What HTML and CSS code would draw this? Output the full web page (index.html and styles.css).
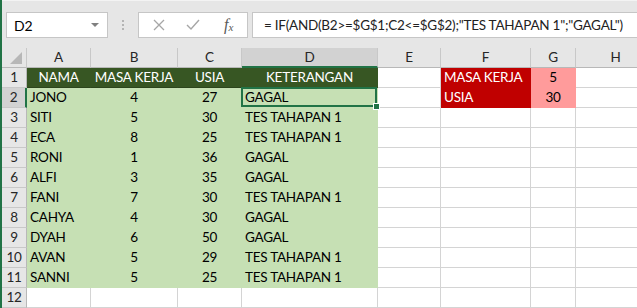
FILE: index.html
```html
<!DOCTYPE html>
<html lang="id">
<head>
    <meta charset="UTF-8">
    <title>Excel - IF AND</title>
    <link rel="stylesheet" href="styles.css">
</head>
<body>
    <div class="app">
        <div class="formula-bar">
            <div class="name-box">
                <span>D2</span>
                <span class="drop"></span>
            </div>
            <div class="grip"><i></i><i></i><i></i></div>
            <div class="fx-buttons">
                <svg width="12" height="12" viewBox="0 0 12 12"><path d="M1 1 L11 11 M11 1 L1 11" stroke="#a6a6a6" stroke-width="1.3" fill="none"/></svg>
                <svg width="14" height="12" viewBox="0 0 14 12"><path d="M1 6 L5 10 L13 1" stroke="#a6a6a6" stroke-width="1.4" fill="none"/></svg>
                <span class="fx">f<sub>x</sub></span>
            </div>
            <div class="formula">= IF(AND(B2&gt;=$G$1;C2&lt;=$G$2);"TES TAHAPAN 1";"GAGAL")</div>
        </div>

        <div class="sheet">
            <!-- header kolom -->
            <div class="hdr corner"><span class="tri"></span></div>
            <div class="hdr">A</div>
            <div class="hdr">B</div>
            <div class="hdr">C</div>
            <div class="hdr sel-col">D</div>
            <div class="hdr">E</div>
            <div class="hdr">F</div>
            <div class="hdr">G</div>
            <div class="hdr">H</div>

            <div class="rh">1</div>
            <div class="cell dg c">NAMA</div>
            <div class="cell dg c">MASA KERJA</div>
            <div class="cell dg c">USIA</div>
            <div class="cell dg c">KETERANGAN</div>
            <div class="cell"></div>
            <div class="cell red">MASA KERJA</div>
            <div class="cell pink c">5</div>
            <div class="cell"></div>

            <div class="rh sel-row">2</div>
            <div class="cell lg">JONO</div>
            <div class="cell lg c">4</div>
            <div class="cell lg c">27</div>
            <div class="cell lg active">GAGAL</div>
            <div class="cell"></div>
            <div class="cell red">USIA</div>
            <div class="cell pink c">30</div>
            <div class="cell"></div>

            <div class="rh">3</div>
            <div class="cell lg">SITI</div>
            <div class="cell lg c">5</div>
            <div class="cell lg c">30</div>
            <div class="cell lg">TES TAHAPAN 1</div>
            <div class="cell"></div><div class="cell"></div><div class="cell"></div><div class="cell"></div>

            <div class="rh">4</div>
            <div class="cell lg">ECA</div>
            <div class="cell lg c">8</div>
            <div class="cell lg c">25</div>
            <div class="cell lg">TES TAHAPAN 1</div>
            <div class="cell"></div><div class="cell"></div><div class="cell"></div><div class="cell"></div>

            <div class="rh">5</div>
            <div class="cell lg">RONI</div>
            <div class="cell lg c">1</div>
            <div class="cell lg c">36</div>
            <div class="cell lg">GAGAL</div>
            <div class="cell"></div><div class="cell"></div><div class="cell"></div><div class="cell"></div>

            <div class="rh">6</div>
            <div class="cell lg">ALFI</div>
            <div class="cell lg c">3</div>
            <div class="cell lg c">35</div>
            <div class="cell lg">GAGAL</div>
            <div class="cell"></div><div class="cell"></div><div class="cell"></div><div class="cell"></div>

            <div class="rh">7</div>
            <div class="cell lg">FANI</div>
            <div class="cell lg c">7</div>
            <div class="cell lg c">30</div>
            <div class="cell lg">TES TAHAPAN 1</div>
            <div class="cell"></div><div class="cell"></div><div class="cell"></div><div class="cell"></div>

            <div class="rh">8</div>
            <div class="cell lg">CAHYA</div>
            <div class="cell lg c">4</div>
            <div class="cell lg c">30</div>
            <div class="cell lg">GAGAL</div>
            <div class="cell"></div><div class="cell"></div><div class="cell"></div><div class="cell"></div>

            <div class="rh">9</div>
            <div class="cell lg">DYAH</div>
            <div class="cell lg c">6</div>
            <div class="cell lg c">50</div>
            <div class="cell lg">GAGAL</div>
            <div class="cell"></div><div class="cell"></div><div class="cell"></div><div class="cell"></div>

            <div class="rh">10</div>
            <div class="cell lg">AVAN</div>
            <div class="cell lg c">5</div>
            <div class="cell lg c">29</div>
            <div class="cell lg">TES TAHAPAN 1</div>
            <div class="cell"></div><div class="cell"></div><div class="cell"></div><div class="cell"></div>

            <div class="rh">11</div>
            <div class="cell lg">SANNI</div>
            <div class="cell lg c">5</div>
            <div class="cell lg c">25</div>
            <div class="cell lg">TES TAHAPAN 1</div>
            <div class="cell"></div><div class="cell"></div><div class="cell"></div><div class="cell"></div>

            <div class="rh">12</div>
            <div class="cell"></div><div class="cell"></div><div class="cell"></div><div class="cell"></div>
            <div class="cell"></div><div class="cell"></div><div class="cell"></div><div class="cell"></div>
        </div>
    </div>
</body>
</html>
```

FILE: styles.css
```css
html, body {
    margin: 0;
    padding: 0;
    background: #ffffff;
    overflow: hidden;
}
body {
    font-family: Lato, 'Liberation Sans', sans-serif;
    font-size: 13.5px;
    letter-spacing: -0.25px;
    color: #000;
}
.app {
    border-left: 2px solid #217346;
    height: 308px;
    box-sizing: border-box;
    overflow: hidden;
}

/* formula bar */
.formula-bar {
    height: 48px;
    background: #e6e6e6;
    border-top: 1px solid #f3f3f3;
    box-sizing: border-box;
    display: flex;
    align-items: flex-start;
    padding-top: 11px;
    padding-left: 4px;
}
.formula-bar > div {
    flex-shrink: 0;
}
.name-box {
    width: 102px;
    height: 26px;
    background: #fff;
    border: 1px solid #c6c6c6;
    box-sizing: border-box;
    display: flex;
    align-items: center;
    justify-content: space-between;
    padding: 0 8px 0 7px;
    font-size: 14px;
}
.drop {
    width: 0;
    height: 0;
    border-left: 4px solid transparent;
    border-right: 4px solid transparent;
    border-top: 4px solid #808080;
}
.grip {
    width: 30px;
    height: 26px;
    display: flex;
    flex-direction: column;
    align-items: center;
    justify-content: center;
    gap: 2px;
}
.grip i {
    width: 2px;
    height: 2px;
    background: #b4b4b4;
}
.fx-buttons {
    width: 110px;
    height: 26px;
    background: #fff;
    border: 1px solid #c6c6c6;
    box-sizing: border-box;
    display: flex;
    align-items: center;
    padding-left: 14px;
    gap: 21px;
}
.fx {
    font-family: 'Liberation Serif', serif;
    font-style: italic;
    font-size: 16px;
    color: #595959;
    margin-left: 3px;
    letter-spacing: 0;
}
.fx sub {
    font-size: 11px;
    vertical-align: baseline;
    position: relative;
    top: 1px;
}
.formula-bar > .formula {
    flex: 1 1 auto;
    min-width: 0;
    height: 26px;
    margin-left: 4px;
    background: #fff;
    border: 1px solid #c6c6c6;
    border-right: none;
    box-sizing: border-box;
    padding-left: 11px;
    line-height: 24px;
    white-space: nowrap;
    overflow: hidden;
    color: #222;
}

/* sheet */
.sheet {
    display: grid;
    grid-template-columns: 25px 64px 87px 64px 136px 63px 90px 45px 80px;
    grid-auto-rows: 20px;
}
.sheet > div {
    box-sizing: border-box;
    border-right: 1px solid #d4d4d4;
    border-bottom: 1px solid #d4d4d4;
    white-space: nowrap;
    overflow: hidden;
    line-height: 19px;
}
.hdr {
    background: #e6e6e6;
    text-align: center;
    color: #262626;
    border-right-color: #c8c8c8 !important;
    border-bottom-color: #b8b8b8 !important;
}
.corner {
    position: relative;
}
.tri {
    position: absolute;
    right: 4px;
    bottom: 3px;
    width: 0;
    height: 0;
    border-left: 12px solid transparent;
    border-bottom: 12px solid #b7b7b7;
}
.sel-col {
    background: #d2d2d2;
    border-bottom: 2px solid #217346 !important;
    line-height: 18px !important;
}
.rh {
    background: #e6e6e6;
    text-align: center;
    color: #262626;
    border-right-color: #b8b8b8 !important;
    border-bottom-color: #c8c8c8 !important;
}
.sel-row {
    background: #d2d2d2;
    border-right: 2px solid #217346 !important;
}
.cell {
    padding-left: 3px;
}
.c {
    text-align: center;
    padding-left: 0;
}
.dg {
    background: #375623;
    border-color: #375623 !important;
    color: #fff;
}
.sheet > .dg {
    border-bottom-color: #2c451c !important;
}
.lg {
    background: #c6e0b4;
    border-color: #c6e0b4 !important;
}
.red {
    background: #c00000;
    border-color: #c00000 !important;
    color: #fff;
}
.pink {
    background: #ff9b9b;
    border-color: #ff9b9b !important;
}
.active {
    position: relative;
    overflow: visible !important;
}
.active::after {
    content: '';
    position: absolute;
    left: -1px;
    top: -1px;
    right: 0;
    bottom: 0;
    border: 2px solid #217346;
}
.active::before {
    content: '';
    position: absolute;
    right: -3px;
    bottom: -3px;
    width: 5px;
    height: 5px;
    background: #217346;
    border: 1px solid #fff;
    z-index: 1;
}
```
